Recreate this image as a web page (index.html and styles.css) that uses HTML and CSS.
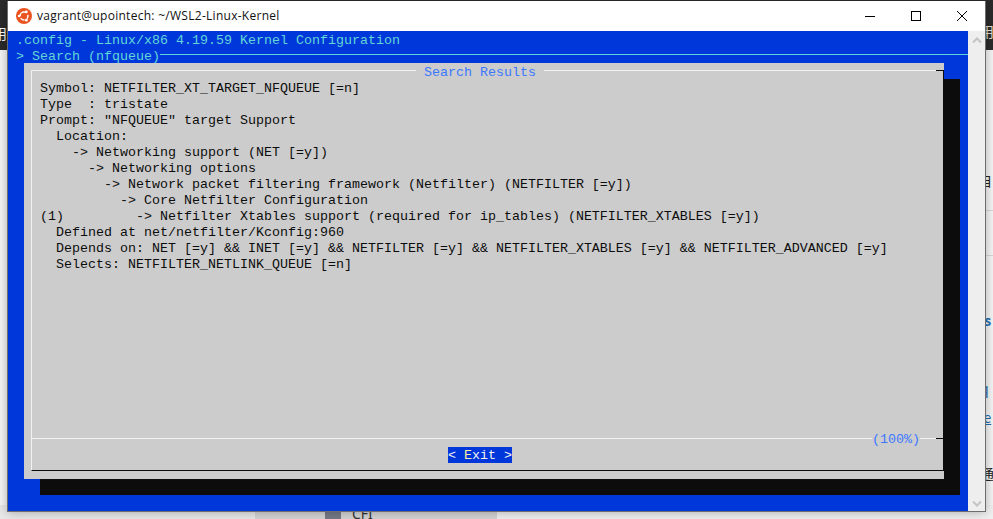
FILE: index.html
```html
<!DOCTYPE html>
<html lang="en">
<head>
<meta charset="utf-8">
<title>vagrant@upointech: ~/WSL2-Linux-Kernel</title>
<link rel="stylesheet" href="styles.css">
</head>
<body>
<div class="desktop">
  <div class="desk-top"></div>
  <span class="frag frag-l">用</span>
  <span class="frag frag-r1">用</span>
  <span class="frag frag-r2">自</span>
  <i class="rule rule-1"></i>
  <i class="rule rule-2"></i>
  <span class="frag link frag-r3">c</span>
  <span class="frag link bold frag-r4">as</span>
  <span class="frag link under frag-r5">q</span>
  <span class="frag link under frag-r6">ue</span>
  <span class="frag frag-r7">通</span>
  <div class="desk-bottom"><i class="desk-square"></i><span class="desk-word">CFI</span></div>
</div>

<main class="window">
  <header class="titlebar">
    <svg class="app-icon" viewBox="0 0 16 16" width="16" height="16" aria-hidden="true">
      <circle cx="8" cy="8" r="8" fill="#E95420"/>
      <circle cx="8" cy="8" r="3.9" fill="none" stroke="#fff" stroke-width="1.5"/>
      <path d="M8 8 L12.5 2.5 L15 6 Z M8 8 L2 8 L2 12 Z" fill="#E95420"/>
      <path d="M8 8 L13 13 L9 15 Z" fill="#E95420"/>
      <circle cx="3.2" cy="8" r="1.35" fill="#fff"/>
      <circle cx="10.4" cy="3.8" r="1.35" fill="#fff"/>
      <circle cx="10.4" cy="12.2" r="1.35" fill="#fff"/>
    </svg>
    <span class="title">vagrant@upointech: ~/WSL2-Linux-Kernel</span>
    <div class="controls">
      <svg class="ctl" viewBox="0 0 46 30" width="46" height="30" aria-hidden="true"><path d="M18 15.5H28" stroke="#000" fill="none"/></svg>
      <svg class="ctl" viewBox="0 0 46 30" width="46" height="30" aria-hidden="true"><rect x="18.5" y="10.5" width="9" height="9" stroke="#000" fill="none"/></svg>
      <svg class="ctl" viewBox="0 0 46 30" width="46" height="30" aria-hidden="true"><path d="M18 10L28 20M28 10L18 20" stroke="#000" fill="none"/></svg>
    </div>
  </header>
  <div class="body">
    <section class="terminal">
      <div class="row hd">.config - Linux/x86 4.19.59 Kernel Configuration</div>
      <div class="row hd crumb"><span class="pre">&gt; Search (nfqueue)</span><i class="crumb-line"></i></div>
      <div class="dialog">
        <div class="box">
          <div class="box-title">Search Results</div>
          <pre class="results">Symbol: NETFILTER_XT_TARGET_NFQUEUE [=n]
Type  : tristate
Prompt: "NFQUEUE" target Support
  Location:
    -&gt; Networking support (NET [=y])
      -&gt; Networking options
        -&gt; Network packet filtering framework (Netfilter) (NETFILTER [=y])
          -&gt; Core Netfilter Configuration
(1)         -&gt; Netfilter Xtables support (required for ip_tables) (NETFILTER_XTABLES [=y])
  Defined at net/netfilter/Kconfig:960
  Depends on: NET [=y] &amp;&amp; INET [=y] &amp;&amp; NETFILTER [=y] &amp;&amp; NETFILTER_XTABLES [=y] &amp;&amp; NETFILTER_ADVANCED [=y]
  Selects: NETFILTER_NETLINK_QUEUE [=n]</pre>
          <div class="divider"><i class="div-white"></i><span class="percent">(100%)</span><i class="div-white short"></i><i class="div-black"></i></div>
          <div class="footer"><span class="exit">&lt; <b class="hot">E</b>xit &gt;</span></div>
        </div>
      </div>
    </section>
    <aside class="scrollbar">
      <svg viewBox="0 0 10 8" width="10" height="8" aria-hidden="true"><path d="M1 6.5L5 2.5L9 6.5" stroke="#c4c4c4" stroke-width="2" fill="none"/></svg>
      <svg viewBox="0 0 10 8" width="10" height="8" aria-hidden="true"><path d="M1 1.5L5 5.5L9 1.5" stroke="#c4c4c4" stroke-width="2" fill="none"/></svg>
    </aside>
  </div>
</main>
</body>
</html>
```
FILE: styles.css
```css
html, body {
  margin: 0;
  height: 100%;
  overflow: hidden;
  background: #f6f6f6;
}

.desktop {
  position: absolute;
  inset: 0;
  overflow: hidden;
}

.desk-top {
  height: 50px;
  background: #2b2b2b;
}

.frag {
  position: absolute;
  font: 14px "Noto Sans CJK SC", sans-serif;
  line-height: 16px;
  color: #222;
}

.frag-l { left: -7px; top: 25px; color: #fff; }
.frag-r1 { left: 980px; top: 23px; color: #e8e0d0; }
.frag-r2 { left: 978px; top: 172px; }
.frag-r3 { left: 978px; top: 285px; color: #1f6fb5; font-weight: 700; }
.frag-r4 { left: 976px; top: 312px; font-weight: 700; }
.frag-r5 { left: 980px; top: 380px; }
.frag-r6 { left: 975px; top: 409px; }
.frag-r7 { left: 980px; top: 465px; }

.link { color: #1f6fb5; }
.under { text-decoration: underline; }

.rule {
  position: absolute;
  left: 980px;
  right: 0;
  height: 1px;
  background: #d8d8d8;
}
.rule-1 { top: 210px; }
.rule-2 { top: 255px; }

.desk-bottom {
  position: absolute;
  left: 0;
  right: 0;
  top: 505px;
  bottom: 0;
  background: linear-gradient(90deg, #e8e8e8 0 255px, #d4d4d4 255px 497px, #f0f0f0 497px);
}

.desk-square {
  position: absolute;
  left: 325px;
  top: 0;
  width: 16px;
  height: 14px;
  background: #767a86;
}

.desk-word {
  position: absolute;
  left: 352px;
  top: -1px;
  font: 14px "Noto Sans", sans-serif;
  color: #333;
}

.window {
  position: absolute;
  left: 7px;
  top: 1px;
  width: 977px;
  height: 510px;
  display: flex;
  flex-direction: column;
  border: 1px solid #6d6d6d;
  border-top: 0;
  box-shadow: 0 0 10px rgba(0, 0, 0, 0.3);
  background: #fff;
}

.titlebar {
  height: 30px;
  flex: none;
  display: flex;
  align-items: center;
  padding-left: 8px;
  background: #fff;
}

.app-icon { flex: none; margin-top: -1px; }

.title {
  margin-left: 5px;
  font: 12px/16px "Open Sans", sans-serif;
  letter-spacing: 0.28px;
  color: #111;
  margin-top: -1px;
}

.controls {
  margin-left: auto;
  display: flex;
}

.ctl { display: block; flex: none; margin-top: -1px; }

.body {
  flex: 1;
  display: flex;
  min-height: 0;
}

.terminal {
  width: 960px;
  flex: none;
  background: #0037da;
  font: 13.33px/16px "Liberation Mono", "Noto Sans CJK SC", monospace;
  color: #0c0c0c;
  overflow: hidden;
}

.row {
  box-sizing: border-box;
  height: 16px;
  padding: 2px 0 0 8px;
  white-space: pre;
}

.hd { color: #61d6d6; }

.crumb {
  display: flex;
  align-items: flex-start;
}

.pre { white-space: pre; }

.crumb-line {
  flex: 1;
  height: 1px;
  margin-top: 5px;
  background: #61d6d6;
}

.dialog {
  box-sizing: border-box;
  width: 920px;
  height: 416px;
  margin-left: 16px;
  padding: 7px 0 0 7px;
  background: #ccc;
  box-shadow: 16px 16px 0 #0c0c0c;
}

.box {
  position: relative;
  box-sizing: border-box;
  height: 401px;
  width: 913px;
  display: flex;
  flex-direction: column;
  border-left: 1px solid #f2f2f2;
  border-top: 1px solid #f2f2f2;
  border-right: 1px solid #0c0c0c;
  border-bottom: 1px solid #0c0c0c;
}

.box::before {
  content: "";
  position: absolute;
  top: -1px;
  right: -1px;
  width: 8px;
  height: 1px;
  background: #0c0c0c;
}

.box-title {
  position: absolute;
  left: 384px;
  top: -8px;
  box-sizing: border-box;
  height: 16px;
  padding: 2px 8px 0;
  background: #ccc;
  color: #3b78ff;
  white-space: pre;
}

.results {
  flex: none;
  height: 367px;
  margin: 0;
  padding: 10px 0 0 8px;
  box-sizing: border-box;
  font: inherit;
  white-space: pre;
  color: #0c0c0c;
}

.divider {
  flex: none;
  height: 16px;
  margin-top: -8px;
  display: flex;
  align-items: center;
}

.div-white { flex: 1; height: 1px; background: #f2f2f2; }
.div-white.short { flex: none; width: 16px; }
.div-black { flex: none; width: 7px; height: 1px; background: #0c0c0c; }

.percent {
  box-sizing: border-box;
  align-self: flex-start;
  height: 16px;
  padding-top: 2px;
  color: #3b78ff;
}

.footer {
  padding: 1px 0 0 416px;
  flex: none;
}

.exit {
  display: block;
  box-sizing: border-box;
  height: 16px;
  width: 64px;
  padding-top: 1px;
  background: #0037da;
  color: #f2f2f2;
  white-space: pre;
}

.hot { color: #f9f1a5; font-weight: 400; }

.scrollbar {
  flex: 1;
  display: flex;
  flex-direction: column;
  justify-content: space-between;
  align-items: center;
  padding: 5px 0 3px;
  background: #eee;
}
```
